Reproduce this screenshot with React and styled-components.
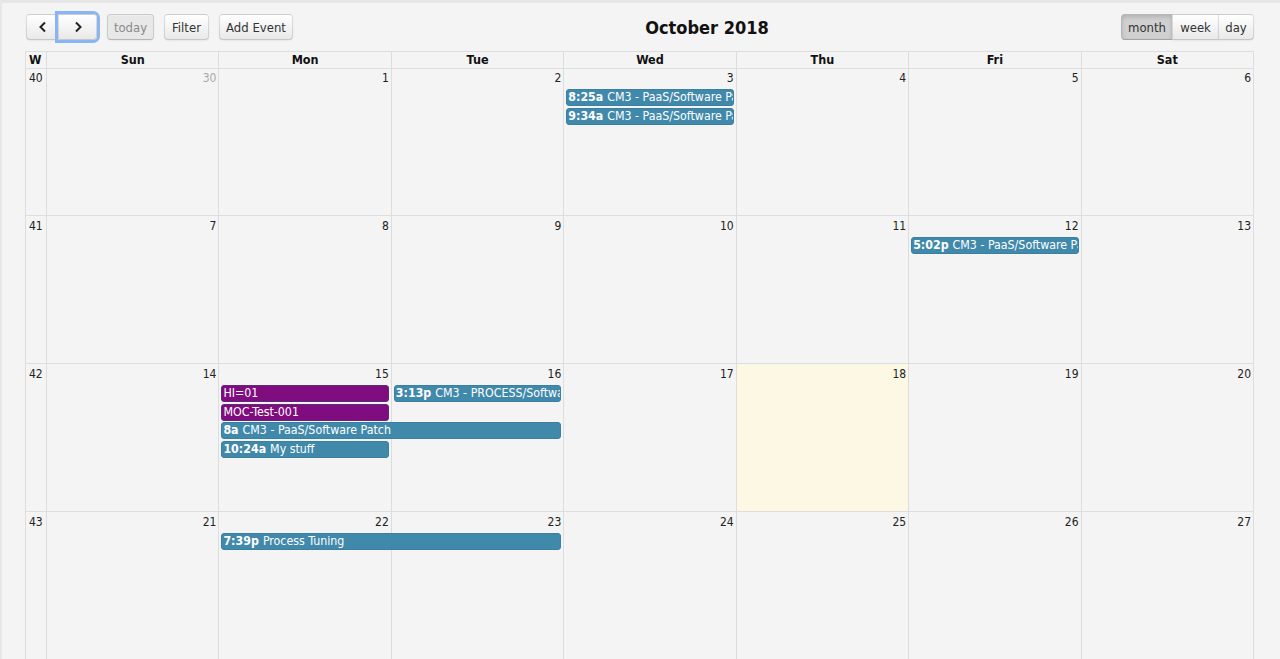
import React from "react";
import styled, { createGlobalStyle, css } from "styled-components";

const Global = createGlobalStyle`
  html, body { margin: 0; padding: 0; background: #f4f4f4; }
  body { font-family: "DejaVu Sans Condensed", "Liberation Sans", Arial, sans-serif; color: #222; }
  #root { height: 659px; overflow: hidden; }
`;

const Page = styled.div`
  height: 659px;
  box-sizing: border-box;
  border-top: 3px solid #e6e6e6;
  border-left: 2px solid #e8e8e8;
  padding: 11px 26px 0 23px;
  background: #f4f4f4;
`;

const Toolbar = styled.div`
  display: flex;
  align-items: center;
  height: 26px;
  margin-bottom: 11px;
  padding-left: 1px;
`;

const Side = styled.div`
  display: flex;
  align-items: center;
  gap: 10px;
`;

const Center = styled.div`
  flex: 1;
  text-align: center;
`;

const Title = styled.h2`
  margin: 0;
  font-size: 18px;
  font-weight: bold;
  color: #111;
`;

const Group = styled.div`
  display: flex;
`;

const Btn = styled.button`
  height: 26px;
  box-sizing: border-box;
  padding: 0;
  width: ${(p) => p.$w}px;
  font-family: inherit;
  font-size: 13px;
  color: ${(p) => (p.disabled ? "#8a8a8a" : "#333")};
  background: ${(p) =>
    p.$active
      ? "#d0d0d0"
      : p.disabled
      ? "#e8e8e8"
      : "linear-gradient(#ffffff, #e9e9e9)"};
  border: 1px solid rgba(0, 0, 0, 0.12);
  border-bottom-color: rgba(0, 0, 0, 0.22);
  border-radius: 4px;
  box-shadow: ${(p) =>
    p.$active
      ? "inset 0 2px 4px rgba(0,0,0,0.15)"
      : "inset 0 1px 0 rgba(255,255,255,0.3), 0 1px 2px rgba(0,0,0,0.06)"};
  display: flex;
  align-items: center;
  justify-content: center;
  cursor: pointer;
  ${(p) =>
    p.$focus &&
    css`
      box-shadow: 0 0 0 3px #87b6f2, inset 0 1px 0 rgba(255, 255, 255, 0.3);
      position: relative;
      z-index: 1;
    `}
  ${Group} > & {
    border-radius: 0;
    margin-left: -1px;
  }
  ${Group} > &:first-child {
    border-radius: 4px 0 0 4px;
    margin-left: 0;
  }
  ${Group} > &:last-child {
    border-radius: 0 4px 4px 0;
  }
`;

const Chevron = ({ dir }) => (
  <svg width="10" height="12" viewBox="0 0 10 12">
    <path
      d={dir === "left" ? "M7 1.5 L2.5 6 L7 10.5" : "M3 1.5 L7.5 6 L3 10.5"}
      fill="none"
      stroke="#222"
      strokeWidth="2"
    />
  </svg>
);

const Calendar = styled.div`
  border-left: 1px solid #ddd;
  border-top: 1px solid #ddd;
`;

const cols = css`
  display: grid;
  grid-template-columns: 21px repeat(7, 1fr);
`;

const HeaderRow = styled.div`
  ${cols};
  height: 16px;
`;

const HeadCell = styled.div`
  box-sizing: border-box;
  border-right: 1px solid #ddd;
  border-bottom: 1px solid #ddd;
  font-size: 12.5px;
  font-weight: bold;
  line-height: 16px;
  text-align: ${(p) => (p.$left ? "left" : "center")};
  padding-left: ${(p) => (p.$left ? "3px" : "0")};
  color: #111;
`;

const WeekRow = styled.div`
  ${cols};
  grid-template-rows: 21px repeat(4, 18.67px) 1fr;
  height: 148px;
`;

const BgCell = styled.div`
  grid-row: 1 / -1;
  grid-column: ${(p) => p.$col};
  box-sizing: border-box;
  border-right: 1px solid #ddd;
  border-bottom: 1px solid #ddd;
  background: ${(p) => (p.$today ? "#fcf8e3" : "transparent")};
`;

const WeekNum = styled.div`
  grid-row: 1;
  grid-column: 1;
  font-size: 12px;
  padding: 3px 0 0 3px;
  color: #222;
`;

const DayNum = styled.div`
  grid-row: 1;
  grid-column: ${(p) => p.$col};
  font-size: 12px;
  text-align: right;
  padding: 3px 3px 0 0;
  color: ${(p) => (p.$other ? "#a8a8a8" : "#222")};
`;

const Event = styled.div`
  grid-row: ${(p) => p.$slot + 2};
  grid-column: ${(p) => p.$col} / span ${(p) => p.$span};
  align-self: start;
  margin: 0 3px 0 2px;
  height: 17px;
  box-sizing: border-box;
  border: 1px solid ${(p) => (p.$purple ? "#5d2a78" : "#3a80a3")};
  border-radius: 3px;
  background: ${(p) => (p.$purple ? "#800d80" : "#4189ab")};
  color: #fff;
  font-size: 12.3px;
  line-height: 15px;
  padding-left: 1px;
  white-space: nowrap;
  overflow: hidden;
`;

const Time = styled.b`
  font-weight: bold;
  margin-right: 4px;
`;

const DAYS = ["Sun", "Mon", "Tue", "Wed", "Thu", "Fri", "Sat"];

const WEEKS = [
  {
    num: 40,
    days: [30, 1, 2, 3, 4, 5, 6],
    events: [
      { d: 3, span: 1, slot: 0, time: "8:25a", title: "CM3 - PaaS/Software Patch" },
      { d: 3, span: 1, slot: 1, time: "9:34a", title: "CM3 - PaaS/Software Patch" },
    ],
  },
  {
    num: 41,
    days: [7, 8, 9, 10, 11, 12, 13],
    events: [
      { d: 5, span: 1, slot: 0, time: "5:02p", title: "CM3 - PaaS/Software Patch" },
    ],
  },
  {
    num: 42,
    days: [14, 15, 16, 17, 18, 19, 20],
    today: 4,
    events: [
      { d: 1, span: 1, slot: 0, title: "HI=01", purple: true },
      { d: 2, span: 1, slot: 0, time: "3:13p", title: "CM3 - PROCESS/Software Patch" },
      { d: 1, span: 1, slot: 1, title: "MOC-Test-001", purple: true },
      { d: 1, span: 2, slot: 2, time: "8a", title: "CM3 - PaaS/Software Patch" },
      { d: 1, span: 1, slot: 3, time: "10:24a", title: "My stuff" },
    ],
  },
  {
    num: 43,
    days: [21, 22, 23, 24, 25, 26, 27],
    events: [
      { d: 1, span: 2, slot: 0, time: "7:39p", title: "Process Tuning" },
    ],
  },
];

export default function App() {
  return (
    <>
      <Global />
      <Page>
        <Toolbar>
          <Side>
            <Group>
              <Btn $w={33} aria-label="prev">
                <Chevron dir="left" />
              </Btn>
              <Btn $w={39} $focus aria-label="next">
                <Chevron dir="right" />
              </Btn>
            </Group>
            <Btn disabled $w={47}>today</Btn>
            <Btn $w={45}>Filter</Btn>
            <Btn $w={74}>Add Event</Btn>
          </Side>
          <Center>
            <Title>October 2018</Title>
          </Center>
          <Side>
            <Group>
              <Btn $active $w={52}>month</Btn>
              <Btn $w={47}>week</Btn>
              <Btn $w={36}>day</Btn>
            </Group>
          </Side>
        </Toolbar>
        <Calendar>
          <HeaderRow>
            <HeadCell $left>W</HeadCell>
            {DAYS.map((d) => (
              <HeadCell key={d}>{d}</HeadCell>
            ))}
          </HeaderRow>
          {WEEKS.map((w) => (
            <WeekRow key={w.num}>
              <BgCell $col={1} />
              {w.days.map((n, i) => (
                <BgCell key={i} $col={i + 2} $today={w.today === i} />
              ))}
              <WeekNum>{w.num}</WeekNum>
              {w.days.map((n, i) => (
                <DayNum key={i} $col={i + 2} $other={w.num === 40 && i === 0}>
                  {n}
                </DayNum>
              ))}
              {w.events.map((e, i) => (
                <Event key={i} $col={e.d + 2} $span={e.span} $slot={e.slot} $purple={e.purple}>
                  {e.time && <Time>{e.time}</Time>}
                  {e.title}
                </Event>
              ))}
            </WeekRow>
          ))}
        </Calendar>
      </Page>
    </>
  );
}
